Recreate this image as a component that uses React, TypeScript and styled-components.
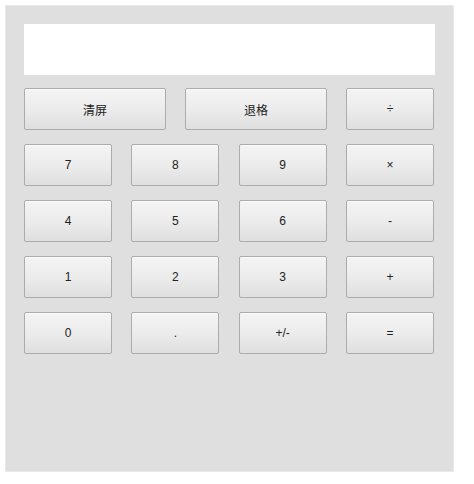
import React from 'react';
import styled, { createGlobalStyle } from 'styled-components';

const GlobalStyle = createGlobalStyle`
  html, body {
    margin: 0;
    padding: 0;
    background: #ffffff;
  }
  body {
    font-family: "Liberation Sans", "Noto Sans CJK SC", sans-serif;
  }
`;

const rows: { label: string; wide?: boolean }[][] = [
  [{ label: '清屏', wide: true }, { label: '退格', wide: true }, { label: '÷' }],
  [{ label: '7' }, { label: '8' }, { label: '9' }, { label: '×' }],
  [{ label: '4' }, { label: '5' }, { label: '6' }, { label: '-' }],
  [{ label: '1' }, { label: '2' }, { label: '3' }, { label: '+' }],
  [{ label: '0' }, { label: '.' }, { label: '+/-' }, { label: '=' }],
];

const App = () => {
  return (
    <>
      <GlobalStyle />
      <Page>
        <Panel>
          <Display />
          <Keypad>
            {rows.map((row, i) => (
              <KeyRow key={i}>
                {row.map((k) => (
                  <Key key={k.label} $wide={k.wide}>
                    {k.label}
                  </Key>
                ))}
              </KeyRow>
            ))}
          </Keypad>
        </Panel>
      </Page>
    </>
  );
};

export default App;

const Page = styled.div`
  width: 474px;
  height: 484px;
  padding: 5px 0 0 5px;
  box-sizing: border-box;
`;

const Panel = styled.div`
  width: 449px;
  height: 467px;
  box-sizing: border-box;
  background: #dfdfdf;
  border: 1px solid #e9e9e9;
  padding: 18px 0 0 18px;
`;

const Display = styled.div`
  width: 411px;
  height: 51px;
  background: #ffffff;
`;

const Keypad = styled.div`
  width: 410px;
  margin-top: 13px;
  display: flex;
  flex-direction: column;
  gap: 14px;
`;

const KeyRow = styled.div`
  display: flex;
  justify-content: space-between;
`;

const Key = styled.button<{ $wide?: boolean }>`
  width: ${(p) => (p.$wide ? '142px' : '88px')};
  height: 42px;
  margin: 0;
  padding: 0;
  box-sizing: border-box;
  border: 1px solid #acacac;
  border-radius: 2px;
  background: linear-gradient(to bottom, #f4f4f4 0%, #ececec 50%, #dfdfdf 100%);
  box-shadow: inset 0 1px 0 #fbfbfb;
  font-family: "Liberation Sans", "Noto Sans CJK SC", sans-serif;
  font-size: 12px;
  color: #222222;
  display: flex;
  align-items: center;
  justify-content: center;
`;
